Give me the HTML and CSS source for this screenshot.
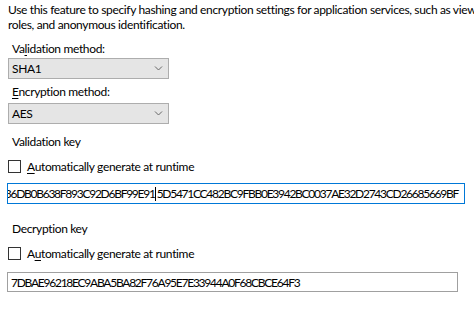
FILE: index.html
```html
<!DOCTYPE html>
<html lang="en">
<head>
    <meta charset="UTF-8">
    <title>Machine Key</title>
    <link rel="stylesheet" href="styles.css">
</head>
<body>
    <div class="page">
        <p class="intro">Use this feature to specify hashing and encryption settings for application services, such as view state, forms authentication, membership and<br>roles, and anonymous identification.</p>

        <div class="field-label first">Va<u>l</u>idation method:</div>
        <div class="select">
            <span>SHA1</span>
            <svg class="chevron" width="9" height="5" viewBox="0 0 9 5"><path d="M1 0.5 L4.5 4 L8 0.5" fill="none" stroke="#666" stroke-width="1"/></svg>
        </div>

        <div class="field-label second"><u>E</u>ncryption method:</div>
        <div class="select select-two">
            <span>AES</span>
            <svg class="chevron" width="9" height="5" viewBox="0 0 9 5"><path d="M1 0.5 L4.5 4 L8 0.5" fill="none" stroke="#666" stroke-width="1"/></svg>
        </div>

        <div class="section-label">Validation key</div>
        <label class="check">
            <span class="box"></span>
            <span><u>A</u>utomatically generate at runtime</span>
        </label>
        <div class="keybox focused">
            <span class="key">36DB0B638F893C92D6BF99E91<span class="caret"></span>5D5471CC482BC9FBB0E3942BC0037AE32D2743CD26685669BF</span>
        </div>

        <div class="section-label decrypt">Decryption key</div>
        <label class="check">
            <span class="box"></span>
            <span>A<u>u</u>tomatically generate at runtime</span>
        </label>
        <div class="keybox short">
            <span class="key">7DBAE96218EC9ABA5BA82F76A95E7E33944A0F68CBCE64F3</span>
        </div>
    </div>
</body>
</html>
```

FILE: styles.css
```css
html, body {
    margin: 0;
    padding: 0;
    background: #fff;
    overflow: hidden;
}
body {
    font-family: "Segoe UI", Lato, sans-serif;
    font-size: 12px;
    line-height: 15px;
    letter-spacing: -0.35px;
    color: #000;
}
.page {
    width: 466px;
    padding: 2px 0 0 8px;
}
.intro {
    margin: 0;
    white-space: nowrap;
}
u {
    text-decoration-thickness: 1px;
    text-underline-offset: 2px;
}
.field-label {
    padding-left: 4px;
}
.field-label.first {
    margin-top: 9px;
}
.field-label.second {
    margin-top: 5px;
}
.select {
    box-sizing: border-box;
    width: 161px;
    height: 21px;
    margin-top: 2px;
    border: 1px solid #adadad;
    background: #e5e5e5;
    display: flex;
    align-items: center;
    justify-content: space-between;
    padding: 0 5px 0 3px;
}
.select-two {
    margin-top: 4px;
}
.chevron {
    display: block;
}
.section-label {
    padding-left: 4px;
    margin-top: 10px;
}
.section-label.decrypt {
    margin-top: 17px;
}
.check {
    display: flex;
    align-items: center;
    gap: 6px;
    margin-top: 10px;
}
.box {
    box-sizing: border-box;
    width: 13px;
    height: 13px;
    border: 1px solid #333;
    background: #fff;
}
.keybox {
    box-sizing: border-box;
    width: 458px;
    height: 21px;
    margin: 9px 0 0 -1px;
    border: 1px solid #7a7a7a;
    display: flex;
    align-items: center;
    overflow: hidden;
    white-space: nowrap;
    padding-left: 3px;
}
.keybox.focused {
    border-color: #0078d7;
    justify-content: flex-end;
    padding: 0 6px 0 0;
}
.keybox.short {
    width: 451px;
    height: 20px;
    margin-top: 11px;
    border-color: #a0a0a0;
}
.key {
    letter-spacing: -1.25px;
    flex-shrink: 0;
}
.focused .key {
    letter-spacing: -1.26px;
}
.caret {
    display: inline-block;
    width: 1px;
    height: 14px;
    margin: 0 1px 0 0;
    background: #000;
    vertical-align: -3px;
}
```
